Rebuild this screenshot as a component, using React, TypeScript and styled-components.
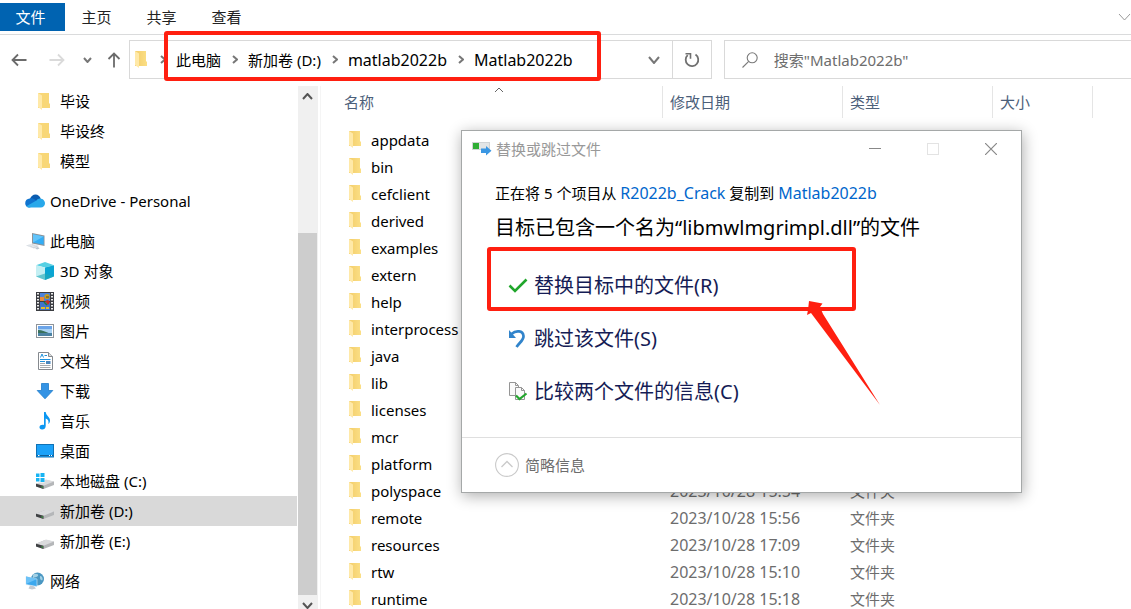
import React from "react";
import styled, { createGlobalStyle } from "styled-components";

const GlobalStyle = createGlobalStyle`
  *, *::before, *::after { box-sizing: border-box; }
  body {
    margin: 0;
    background: #fff;
    color: #000;
    font-family: "Noto Sans", "Noto Sans CJK SC", sans-serif;
    font-size: 15px;
    line-height: 20px;
    overflow: hidden;
  }
  button, input { font: inherit; color: inherit; }
  button { background: none; border: 0; padding: 0; text-align: left; white-space: nowrap; }
  a { color: #0066cc; text-decoration: none; }
  svg { display: block; flex: none; }
  ul, ol { list-style: none; margin: 0; padding: 0; }
`;

const Explorer = styled.div`
  position: relative;
  display: flex;
  flex-direction: column;
  height: 100vh;
  overflow: hidden;
`;

/* ---------- ribbon ---------- */

const Ribbon = styled.div`
  display: flex;
  align-items: center;
  height: 35px;
  flex: none;
  border-bottom: 1px solid #dadbdc;
`;

const RibbonTab = styled.button<{ $active?: boolean }>`
  width: 65px;
  height: 28px;
  padding-right: ${(p) => (p.$active ? 4 : 2)}px;
  text-align: center;
  background: ${(p) => (p.$active ? "#0063b1" : "transparent")};
  color: ${(p) => (p.$active ? "#fff" : "#222")};
`;

const RibbonToggle = styled.button`
  margin-left: auto;
`;

/* ---------- address row ---------- */

const AddressRow = styled.div`
  display: flex;
  flex: none;
  height: 51px;
  padding: 5px 0 7px;
`;

const NavButton = styled.button<{ $width: number }>`
  display: flex;
  align-items: center;
  justify-content: center;
  flex: none;
  width: ${(p) => p.$width}px;
`;

const AddressBox = styled.div`
  position: relative;
  display: flex;
  align-items: center;
  flex: 1;
  min-width: 0;
  padding-left: 5px;
  border: 1px solid #d9d9d9;
`;

const Crumbs = styled.ol`
  display: flex;
  align-items: center;
  flex: 1;
  margin-left: 2px;
`;

const Crumb = styled.li<{ $latin?: boolean }>`
  display: flex;
  align-items: center;
  font-size: ${(p) => (p.$latin ? 16 : 15)}px;
  svg { margin: 0 10px 0 11px; }
`;

const RefreshButton = styled.button`
  display: flex;
  align-items: center;
  justify-content: center;
  align-self: stretch;
  width: 39px;
  border-left: 1px solid #d9d9d9;
`;

const SearchBox = styled.label`
  display: flex;
  align-items: center;
  gap: 16px;
  flex: 0 0 36%;
  margin-left: 12px;
  padding-left: 17px;
  border: 1px solid #d9d9d9;
  border-right: 0;
`;

const SearchInput = styled.input`
  flex: 1;
  min-width: 0;
  padding: 0;
  border: 0;
  outline: 0;
  background: none;
  &::placeholder { color: #6d6d6d; opacity: 1; }
`;

const Highlight = styled.div<{ $left: number; $top: number; $width: number; $height: number }>`
  position: absolute;
  left: ${(p) => p.$left}px;
  top: ${(p) => p.$top}px;
  width: ${(p) => p.$width}px;
  height: ${(p) => p.$height}px;
  border: 4px solid #ff1f10;
  border-radius: 3px;
  pointer-events: none;
`;

/* ---------- navigation pane ---------- */

const Main = styled.div`
  display: flex;
  flex: 1;
  min-height: 0;
`;

const Sidebar = styled.aside`
  display: flex;
  flex: 0 0 321px;
  padding-right: 2px;
  border-right: 1px solid #f5f5f5;
`;

const Tree = styled.ul`
  flex: 1;
  margin-right: 1px;
  overflow: hidden;
`;

const TreeItem = styled.li<{ $nested?: boolean; $selected?: boolean; $spaced?: boolean }>`
  display: flex;
  height: 30px;
  margin-top: ${(p) => (p.$spaced ? 10 : 0)}px;
  padding-left: ${(p) => (p.$nested ? 36 : 25)}px;
  background: ${(p) => (p.$selected ? "#d9d9d9" : "transparent")};
`;

const TreeButton = styled.button<{ $nested?: boolean }>`
  display: flex;
  align-items: center;
  flex: 1;
  gap: ${(p) => (p.$nested ? 6 : 5)}px;
`;

const ScrollBar = styled.div`
  display: flex;
  flex-direction: column;
  flex: 0 0 20px;
  margin-bottom: -6px;
  background: #f0f0f0;
`;

const ScrollButton = styled.button`
  display: flex;
  align-items: center;
  justify-content: center;
  flex: 0 0 20px;
  padding-right: 1px;
`;

const ScrollTrack = styled.div`
  display: flex;
  flex-direction: column;
  justify-content: flex-end;
  flex: 1;
`;

const ScrollThumb = styled.div`
  height: 74%;
  margin-right: 1px;
  background: #cdcdcd;
`;

/* ---------- file list ---------- */

const FilePane = styled.main`
  position: relative;
  flex: 1;
  min-width: 0;
  overflow: hidden;
`;

const FileTable = styled.table`
  width: 100%;
  table-layout: fixed;
  border-collapse: collapse;
`;

const HeadCell = styled.th<{ $width?: number }>`
  width: ${(p) => (p.$width ? `${p.$width}px` : "auto")};
  padding: 0 0 8px;
  font-weight: 400;
  text-align: left;
  color: #4c607a;
`;

const HeadLabel = styled.div<{ $first?: boolean }>`
  position: relative;
  height: 32px;
  line-height: 32px;
  padding-left: ${(p) => (p.$first ? 23 : 7)}px;
  border-right: 1px solid #e5e5e5;
`;

const SortMark = styled.span`
  position: absolute;
  top: 1px;
  right: 158px;
`;

const Cell = styled.td`
  height: 27px;
  padding: 0 0 0 7px;
  color: #6d6d6d;
`;

const DateCell = styled(Cell)`
  font-size: 16px;
`;

const NameCell = styled.td`
  height: 27px;
  padding: 0 0 0 28px;
`;

const FileName = styled.div`
  display: flex;
  align-items: center;
  gap: 10px;
`;

/* ---------- dialog ---------- */

const Dialog = styled.section`
  position: absolute;
  left: 461px;
  top: 130px;
  width: 561px;
  display: flex;
  flex-direction: column;
  background: #fff;
  border: 1px solid #a5a8a8;
  box-shadow: 1px 3px 14px rgba(0, 0, 0, 0.32);
`;

const TitleBar = styled.header`
  display: flex;
  align-items: center;
  height: 35px;
  padding: 0 1px 0 10px;
  color: #999;
`;

const Title = styled.span`
  flex: 1;
  padding-left: 4px;
`;

const WindowButton = styled.button`
  display: flex;
  align-items: center;
  justify-content: center;
  width: 58px;
  height: 35px;
`;

const DialogBody = styled.div`
  position: relative;
  padding: 17px 33px 19px;
`;

const Summary = styled.p`
  margin: 0;
  a { font-size: 16px; }
`;

const Heading = styled.h1`
  margin: 11px 0 17px;
  font-size: 20px;
  font-weight: 400;
  line-height: 28px;
`;

const Option = styled.button`
  display: flex;
  align-items: center;
  gap: 6px;
  height: 53px;
  padding-left: 13px;
  font-size: 20px;
  color: #151c55;
`;

const Pointer = styled.svg`
  position: absolute;
  left: 344px;
  top: 134px;
`;

const DialogFooter = styled.footer`
  height: 55px;
  padding: 15px 33px;
  border-top: 1px solid #dfdfdf;
`;

const DetailsToggle = styled.button`
  display: flex;
  align-items: center;
  gap: 6px;
  color: #6d6d6d;
`;

/* ---------- icons ---------- */

const Chevron = ({ dir, w, h, color = "#666", stroke = 2 }: { dir: "up" | "down" | "right"; w: number; h: number; color?: string; stroke?: number }) => {
  const d = {
    down: `M1 1 L${w / 2} ${h - 1} L${w - 1} 1`,
    up: `M1 ${h - 1} L${w / 2} 1 L${w - 1} ${h - 1}`,
    right: `M1 1 L${w - 1} ${h / 2} L1 ${h - 1}`,
  }[dir];
  return (
    <svg width={w} height={h} viewBox={`0 0 ${w} ${h}`} aria-hidden>
      <path d={d} fill="none" stroke={color} strokeWidth={stroke} />
    </svg>
  );
};

const Arrow = ({ rotate = 0, color }: { rotate?: number; color: string }) => (
  <svg width="16" height="16" viewBox="0 0 16 16" aria-hidden>
    <path d="M15.5 8H1.5M7 2.5L1.5 8L7 13.5" fill="none" stroke={color} strokeWidth="1.8" transform={`rotate(${rotate} 8 8)`} />
  </svg>
);

const FolderIcon = () => (
  <svg width="12" height="17" viewBox="0 0 12 17" aria-hidden>
    <defs>
      <linearGradient id="folderBody" x1="0" y1="0" x2="1" y2="0">
        <stop offset="0" stopColor="#f3cd69" />
        <stop offset="1" stopColor="#fbdf86" />
      </linearGradient>
    </defs>
    <path d="M0 0H11V10L12 11V15H0Z" fill="url(#folderBody)" />
    <path d="M0 0L4 2.5V17L0 14Z" fill="#ffe9a8" />
  </svg>
);

const NestedFolderIcon = () => (
  <svg width="18" height="17" viewBox="-2 0 18 17" aria-hidden>
    <path d="M0 0H11V10L12 11V15H0Z" fill="#f8d777" />
    <path d="M0 0L4 2.5V17L0 14Z" fill="#ffe9a8" />
  </svg>
);

const OneDriveIcon = () => (
  <svg width="20" height="14" viewBox="0 0 20 14" aria-hidden>
    <path d="M5 5C6 2 8 .5 10.500 .5C13 .5 15 2.200 15.700 4.700L12 8L5 6Z" fill="#0a5cb0" />
    <path d="M4.500 13.500C2 13.500 .2 11.600 .2 9.200C.2 6.600 2.200 4.700 4.700 4.600C6.200 3.900 8 4.200 9.300 5.300L13 8L6 13Z" fill="#0f73cf" />
    <path d="M11.500 6.500C12.400 5.200 13.800 4.500 15.200 4.600C17.800 4.700 20 6.800 20 9.300C20 11.700 18.200 13.500 15.800 13.500H4.500C3 13.500 2 13 1.300 12.200Z" fill="#28a8ea" />
  </svg>
);

const PcIcon = () => (
  <svg width="20" height="18" viewBox="0 0 20 18" aria-hidden>
    <path d="M7 1L19.500 3.500V14L7 11.500Z" fill="#8a939b" />
    <path d="M8 2.200L18.700 4.400V12.700L8 10.500Z" fill="#33adf5" />
    <path d="M8 2.200L18.700 4.400L8 10.500Z" fill="#62c4fa" />
    <path d="M1 13.500L7 11.800L14 14L9 16.500Z" fill="#cfd5dc" />
    <path d="M2.500 13.400L7 12.300M4 14.200L9 12.800M6.500 15L11.500 13.500" stroke="#f5f6f8" strokeWidth=".6" />
    <path d="M10 16L13 15L14.500 16.500L12 17.500Z" fill="#bcc5ce" />
  </svg>
);

const CubeIcon = () => (
  <svg width="18" height="18" viewBox="0 0 18 18" aria-hidden>
    <path d="M9 0L18 3.200L9 5.500L0 3.200Z" fill="#55d0e3" />
    <path d="M0 3.200L9 5.500V18L0 14.500Z" fill="#c4eff3" />
    <path d="M18 3.200L9 5.500V18L18 14.500Z" fill="#0aa5d3" />
    <path d="M0 14.500L9 11.500L18 14.500L9 18Z" fill="#22a9b8" opacity=".6" />
  </svg>
);

const VideoIcon = () => (
  <svg width="18" height="19" viewBox="0 0 18 19" aria-hidden>
    <rect width="18" height="19" fill="#3b3d42" />
    <rect x="4" y="1" width="10" height="8" fill="#4b83db" />
    <rect x="4" y="10" width="10" height="8" fill="#3f74cc" />
    <path d="M2 1V19M16 1V19" stroke="#eee" strokeWidth="2" strokeDasharray="1.600 1.400" />
    <circle cx="11" cy="4.500" r="2.600" fill="#c79d1e" />
    <path d="M4 5H8V9H4Z" fill="#e78a3d" />
    <path d="M9 9L12 8L14 10L12 13Z" fill="#c62f22" />
    <path d="M8 10L11 13" stroke="#267a36" strokeWidth="1.500" />
    <path d="M5 16H9M10 16H13" stroke="#e3bd29" strokeWidth="2" />
    <path d="M10 5H13" stroke="#574a20" />
  </svg>
);

const PictureIcon = () => (
  <svg width="18" height="14" viewBox="0 0 18 14" aria-hidden>
    <rect x=".5" y=".5" width="17" height="13" fill="#fff" stroke="#8f9499" />
    <rect x="2" y="2" width="14" height="10" fill="#a9d2f3" />
    <path d="M2 2H16V5H2Z" fill="#6ba4e8" />
    <path d="M2 6C6 6 10 8 15 10H2Z" fill="#39715c" />
    <path d="M2 9H16V12H2Z" fill="#4b82a2" />
  </svg>
);

const DocumentIcon = () => (
  <svg width="18" height="18" viewBox="0 0 18 18" aria-hidden>
    <path d="M2.500 .5H12.500L16.500 4.500V17.500H2.500Z" fill="#fff" stroke="#85898e" />
    <path d="M12.500 .5V4.500H16.500" fill="#ddd" stroke="#85898e" />
    <path d="M4.500 5.500L6 2L7.500 5.500M8.500 3.500H11M4 7.500H14.500M4 9.500H9" stroke="#1d91dc" fill="none" />
    <path d="M4 11.500H9M4 13.500H14.500M4 15.500H14.500" stroke="#a6aaad" />
    <rect x="10" y="9" width="4.500" height="3" fill="#4a86bd" />
  </svg>
);

const DownloadIcon = () => (
  <svg width="18" height="18" viewBox="0 0 18 18" aria-hidden>
    <path d="M5.500 1.500H12.500V8.500H16.800L9 16.800L1.200 8.500H5.500Z" fill="#3493e4" stroke="#1e7ccc" strokeWidth=".8" />
  </svg>
);

const MusicIcon = () => (
  <svg width="18" height="18" viewBox="0 0 18 18" aria-hidden>
    <path d="M8 0H9.700C10 4 14.500 5 14 9C13.800 10.500 13 11.500 12.200 12C13.200 9 12 7.500 9.700 6.500V14C9.700 16.500 7.800 17.600 6 17.500C4.400 17.400 3.300 16.500 3.500 15C3.700 13.200 6 12.300 8 13Z" fill="#0b97f2" />
  </svg>
);

const DesktopIcon = () => (
  <svg width="18" height="14" viewBox="0 0 18 14" aria-hidden>
    <rect x=".5" y=".5" width="17" height="12.500" fill="#1ba1f8" stroke="#1072b5" />
    <path d="M1 11.500H17" stroke="#0e5f99" />
    <path d="M2 11.500H3.500M13 11.500H14M15 11.500H16" stroke="#fff" />
  </svg>
);

const DriveIcon = ({ system }: { system?: boolean }) => (
  <svg width="18" height="18" viewBox="0 0 18 18" aria-hidden>
    <path d="M0 11.800L9 8L18 9.500V13L7.500 17L0 14.500Z" fill="#b5b7b9" />
    <path d="M0 11.800L10 7.500L18 9.500L7.500 13.800Z" fill="#dadbdd" />
    <path d="M0 11.800L7.500 13.800V17L0 14.500Z" fill="#3f4143" />
    <path d="M5.500 15H6.800" stroke="#3fdc48" />
    {system && <path d="M0 0H8.500V10.500H0Z" fill="#fff" />}
    {system && <path d="M0 1.500H3.500V5H0ZM4.500 1H8.500V5H4.500ZM0 6H3.500V9.500H0ZM4.500 6H8.500V10H4.500Z" fill="#17b4f3" />}
  </svg>
);

const NetworkIcon = () => (
  <svg width="20" height="18" viewBox="0 0 20 18" aria-hidden>
    <circle cx="12.500" cy="7" r="6.500" fill="#4a97c2" />
    <path d="M8 2.500C10 1 14 1.500 13 4C12 5.500 9 5 8 6ZM15 4C17 4 18 6 17.500 8C16 9 14.500 7 15 4Z" fill="#a3d0e4" />
    <path d="M1 4.500L12 7V14.500L1 12.500Z" fill="#3ba8ee" stroke="#d8e8f2" strokeWidth=".6" />
    <path d="M1 4.500L12 7L1 12Z" fill="#6cc2f7" />
    <path d="M5 13.500L9 14.200L11 16.500L7 17.500L3.500 16.500Z" fill="#c4cbd2" />
  </svg>
);

const RefreshIcon = () => (
  <svg width="16" height="16" viewBox="0 0 16 16" aria-hidden>
    <path d="M11.500 2.600A6.300 6.300 0 1 1 3.700 3.200" fill="none" stroke="#707070" strokeWidth="1.800" />
    <path d="M1.500 1.800H6.500V6.800" fill="none" stroke="#707070" strokeWidth="1.600" />
  </svg>
);

const SearchIcon = () => (
  <svg width="16" height="16" viewBox="0 0 16 16" aria-hidden>
    <circle cx="10.200" cy="5.800" r="5" fill="none" stroke="#7a7a7a" strokeWidth="1.100" />
    <path d="M6.700 9.300L.5 15.500" stroke="#7a7a7a" strokeWidth="1.100" />
  </svg>
);

const CopyIcon = () => (
  <svg width="20" height="16" viewBox="0 0 20 16" aria-hidden>
    <rect x=".5" y="1.500" width="17" height="7" fill="#e3e5e6" stroke="#d0d3d5" />
    <rect x="1" y="2" width="6" height="6" fill="#2fae35" />
    <path d="M9 7.500H14V5L19.500 9.700L14 14.500V12H9Z" fill="#3b97e3" />
  </svg>
);

const CheckIcon = () => (
  <svg width="20" height="18" viewBox="0 0 20 18" aria-hidden>
    <path d="M1.500 8.500L7 14L18.500 2.500" fill="none" stroke="#21a62c" strokeWidth="2.600" />
  </svg>
);

const SkipIcon = () => (
  <svg width="20" height="20" viewBox="0 0 20 20" aria-hidden>
    <path d="M3.500 5C8 1 15 1.500 15.500 7C15.800 11 12 13 8.500 18" fill="none" stroke="#3184cb" strokeWidth="2.700" />
    <path d="M1 1V9H8Z" fill="#3184cb" />
  </svg>
);

const CompareIcon = () => (
  <svg width="20" height="20" viewBox="0 0 20 20" aria-hidden>
    <path d="M1.500 .5H7.500L10.500 3.500V13.500H1.500Z" fill="#fafafa" stroke="#959595" />
    <path d="M7.500 5.500H13.500L16.500 8.500V17.500H7.500Z" fill="#fafafa" stroke="#959595" />
    <path d="M13.500 5.500V8.500H16.500M7.500 .5V3.500H10" fill="none" stroke="#959595" />
    <path d="M8 13.500L11.500 17L18.500 11.500" fill="none" stroke="#21a62c" strokeWidth="2.200" />
  </svg>
);

const CollapseIcon = () => (
  <svg width="24" height="24" viewBox="0 0 24 24" aria-hidden>
    <circle cx="12" cy="12" r="11.400" fill="none" stroke="#cacaca" strokeWidth="1.100" />
    <path d="M6.500 14L12 8.500L17.500 14" fill="none" stroke="#cacaca" strokeWidth="1.300" />
  </svg>
);

/* ---------- data ---------- */

type TreeEntry = { label: string; icon: React.ReactNode; nested?: boolean; spaced?: boolean; selected?: boolean };

const tree: TreeEntry[] = [
  { label: "毕设", icon: <NestedFolderIcon />, nested: true },
  { label: "毕设终", icon: <NestedFolderIcon />, nested: true },
  { label: "模型", icon: <NestedFolderIcon />, nested: true },
  { label: "OneDrive - Personal", icon: <OneDriveIcon />, spaced: true },
  { label: "此电脑", icon: <PcIcon />, spaced: true },
  { label: "3D 对象", icon: <CubeIcon />, nested: true },
  { label: "视频", icon: <VideoIcon />, nested: true },
  { label: "图片", icon: <PictureIcon />, nested: true },
  { label: "文档", icon: <DocumentIcon />, nested: true },
  { label: "下载", icon: <DownloadIcon />, nested: true },
  { label: "音乐", icon: <MusicIcon />, nested: true },
  { label: "桌面", icon: <DesktopIcon />, nested: true },
  { label: "本地磁盘 (C:)", icon: <DriveIcon system />, nested: true },
  { label: "新加卷 (D:)", icon: <DriveIcon />, nested: true, selected: true },
  { label: "新加卷 (E:)", icon: <DriveIcon />, nested: true },
  { label: "网络", icon: <NetworkIcon />, spaced: true },
];

const files: { name: string; modified?: string; type?: string }[] = [
  { name: "appdata" },
  { name: "bin" },
  { name: "cefclient" },
  { name: "derived" },
  { name: "examples" },
  { name: "extern" },
  { name: "help" },
  { name: "interprocess" },
  { name: "java" },
  { name: "lib" },
  { name: "licenses" },
  { name: "mcr" },
  { name: "platform" },
  { name: "polyspace", modified: "2023/10/28 15:54", type: "文件夹" },
  { name: "remote", modified: "2023/10/28 15:56", type: "文件夹" },
  { name: "resources", modified: "2023/10/28 17:09", type: "文件夹" },
  { name: "rtw", modified: "2023/10/28 15:10", type: "文件夹" },
  { name: "runtime", modified: "2023/10/28 15:18", type: "文件夹" },
];

const crumbs = [
  { label: "此电脑" },
  { label: "新加卷 (D:)" },
  { label: "matlab2022b", latin: true },
  { label: "Matlab2022b", latin: true },
];

const columns = [
  { label: "名称", width: 342 },
  { label: "修改日期", width: 180 },
  { label: "类型", width: 150 },
  { label: "大小", width: 100 },
];

const options = [
  { label: "替换目标中的文件(R)", icon: <CheckIcon /> },
  { label: "跳过该文件(S)", icon: <SkipIcon /> },
  { label: "比较两个文件的信息(C)", icon: <CompareIcon /> },
];

function ReplaceDialog() {
  return (
    <Dialog role="dialog" aria-label="替换或跳过文件">
      <TitleBar>
        <CopyIcon />
        <Title>替换或跳过文件</Title>
        <WindowButton aria-label="最小化">
          <svg width="12" height="12"><path d="M0 5.500H12" stroke="#888" /></svg>
        </WindowButton>
        <WindowButton aria-label="最大化" disabled>
          <svg width="12" height="12"><rect x=".5" y=".5" width="11" height="11" fill="none" stroke="#e3e3e3" /></svg>
        </WindowButton>
        <WindowButton aria-label="关闭">
          <svg width="12" height="12"><path d="M0 0L12 12M12 0L0 12" stroke="#888" strokeWidth="1.200" /></svg>
        </WindowButton>
      </TitleBar>
      <DialogBody>
        <Summary>
          正在将 5 个项目从 <a href="#source">R2022b_Crack</a> 复制到 <a href="#target">Matlab2022b</a>
        </Summary>
        <Heading>目标已包含一个名为“libmwlmgrimpl.dll”的文件</Heading>
        {options.map((o) => (
          <Option key={o.label}>
            {o.icon}
            {o.label}
          </Option>
        ))}
        <Highlight $left={25} $top={81} $width={369} $height={64} />
        <Pointer width="76" height="106" viewBox="0 0 76 106" aria-hidden>
          <path d="M3 1L16.500 3.500L14 7L17 14L74 105L5 13L1 15L2 10Z" fill="#ff1f10" />
        </Pointer>
      </DialogBody>
      <DialogFooter>
        <DetailsToggle>
          <CollapseIcon />
          简略信息
        </DetailsToggle>
      </DialogFooter>
    </Dialog>
  );
}

export default function App() {
  return (
    <>
      <GlobalStyle />
      <Explorer>
        <Ribbon>
          <RibbonTab $active>文件</RibbonTab>
          <RibbonTab>主页</RibbonTab>
          <RibbonTab>共享</RibbonTab>
          <RibbonTab>查看</RibbonTab>
          <RibbonToggle aria-label="展开功能区">
            <Chevron dir="down" w={13} h={8} color="#999" stroke={1} />
          </RibbonToggle>
        </Ribbon>

        <AddressRow>
          <NavButton $width={38} aria-label="后退"><Arrow color="#6b6b6b" /></NavButton>
          <NavButton $width={38} aria-label="前进"><Arrow color="#dadada" rotate={180} /></NavButton>
          <NavButton $width={22} aria-label="最近位置"><Chevron dir="down" w={9} h={6} color="#777" /></NavButton>
          <NavButton $width={31} aria-label="上移"><Arrow color="#6b6b6b" rotate={90} /></NavButton>
          <AddressBox>
            <FolderIcon />
            <Crumbs>
              {crumbs.map((c) => (
                <Crumb key={c.label} $latin={c.latin}>
                  <Chevron dir="right" w={6} h={9} color="#777" />
                  <button>{c.label}</button>
                </Crumb>
              ))}
            </Crumbs>
            <NavButton $width={36} aria-label="历史记录"><Chevron dir="down" w={12} h={8} color="#777" /></NavButton>
            <RefreshButton aria-label="刷新"><RefreshIcon /></RefreshButton>
            <Highlight $left={34} $top={-10} $width={437} $height={50} />
          </AddressBox>
          <SearchBox>
            <SearchIcon />
            <SearchInput type="text" aria-label="搜索" placeholder={'搜索"Matlab2022b"'} />
          </SearchBox>
        </AddressRow>

        <Main>
          <Sidebar>
            <Tree>
              {tree.map((t) => (
                <TreeItem key={t.label} $nested={t.nested} $selected={t.selected} $spaced={t.spaced}>
                  <TreeButton $nested={t.nested}>
                    {t.icon}
                    {t.label}
                  </TreeButton>
                </TreeItem>
              ))}
            </Tree>
            <ScrollBar>
              <ScrollButton aria-label="向上滚动"><Chevron dir="up" w={11} h={7} color="#555" /></ScrollButton>
              <ScrollTrack><ScrollThumb /></ScrollTrack>
              <ScrollButton aria-label="向下滚动"><Chevron dir="down" w={11} h={7} color="#555" /></ScrollButton>
            </ScrollBar>
          </Sidebar>

          <FilePane>
            <FileTable>
              <thead>
                <tr>
                  {columns.map((c, i) => (
                    <HeadCell key={c.label} $width={c.width}>
                      <HeadLabel $first={i === 0}>
                        {c.label}
                        {i === 0 && (
                          <SortMark>
                            <Chevron dir="up" w={10} h={6} color="#666" stroke={1} />
                          </SortMark>
                        )}
                      </HeadLabel>
                    </HeadCell>
                  ))}
                  <HeadCell />
                </tr>
              </thead>
              <tbody>
                {files.map((f) => (
                  <tr key={f.name}>
                    <NameCell>
                      <FileName>
                        <FolderIcon />
                        {f.name}
                      </FileName>
                    </NameCell>
                    <DateCell>{f.modified}</DateCell>
                    <Cell>{f.type}</Cell>
                    <Cell />
                    <Cell />
                  </tr>
                ))}
              </tbody>
            </FileTable>
          </FilePane>
        </Main>

        <ReplaceDialog />
      </Explorer>
    </>
  );
}
